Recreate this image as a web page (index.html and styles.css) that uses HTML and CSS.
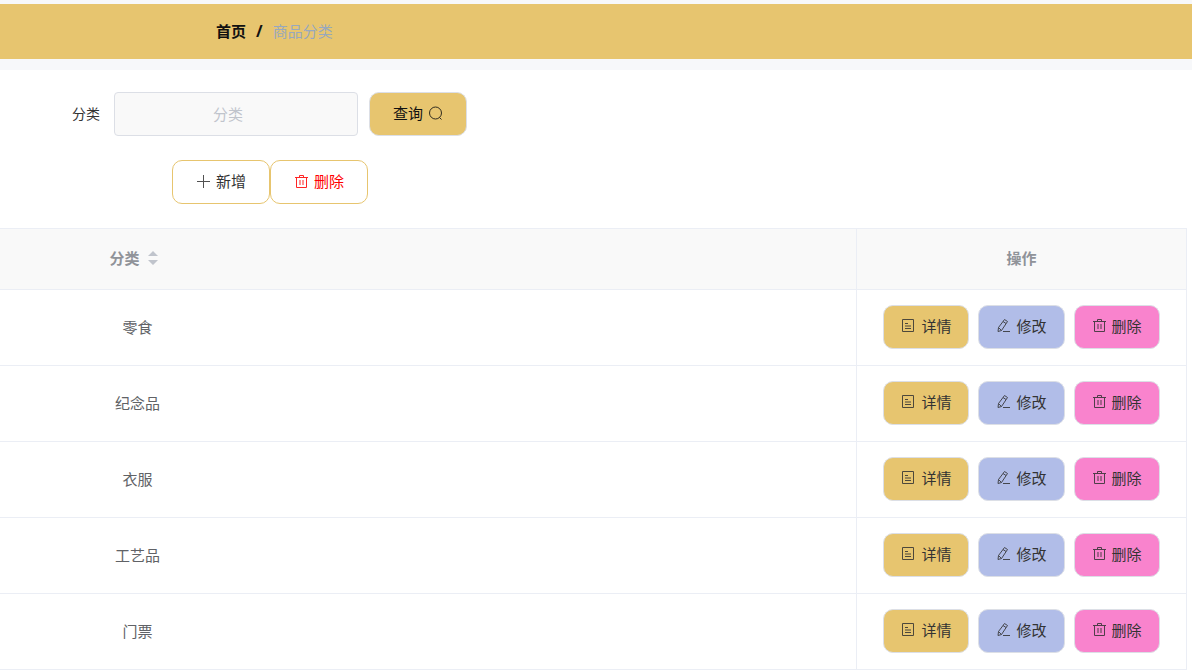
FILE: index.html
```
<!DOCTYPE html>
<html lang="zh-CN">
<head>
    <meta charset="UTF-8">
    <meta name="viewport" content="width=device-width, initial-scale=1.0">
    <title>商品分类</title>
    <link rel="stylesheet" href="styles.css">
</head>
<body>
    <svg class="sprite" aria-hidden="true">
        <symbol id="icon-search" viewBox="0 0 15 15">
            <circle cx="7.5" cy="7" r="6"/>
            <path d="M11.5 11.5l2 2"/>
        </symbol>
        <symbol id="icon-plus" viewBox="0 0 15 15">
            <path d="M7.5 1v13M1 7.5h13"/>
        </symbol>
        <symbol id="icon-delete" viewBox="0 0 15 15">
            <path d="M1 3.5h13M5.5 3.5v-2h4v2M2.5 3.5v10h10v-10M6 6v5M9 6v5"/>
        </symbol>
        <symbol id="icon-detail" viewBox="0 0 15 15">
            <path d="M1.5 1.5h11v12h-11zM4 5.5h3M4 8h6M4 10.5h6"/>
        </symbol>
        <symbol id="icon-edit" viewBox="0 0 15 15">
            <path d="M8.5 1.5l3 2-6 9-3.500 1 .5-4zM7 3.500l3 2M2.500 9.500l3 3M7 13.500h7"/>
        </symbol>
    </svg>

    <nav class="breadcrumb">
        <a href="#" class="home">首页</a>
        <span class="separator">/</span>
        <span class="current">商品分类</span>
    </nav>

    <main class="content">
        <form class="search-form">
            <label for="category">分类</label>
            <input type="text" id="category" placeholder="分类">
            <button type="button" class="btn btn-search">查询<svg class="icon"><use href="#icon-search"/></svg></button>
        </form>

        <div class="toolbar">
            <button type="button" class="btn btn-add"><svg class="icon"><use href="#icon-plus"/></svg>新增</button>
            <button type="button" class="btn btn-remove"><svg class="icon"><use href="#icon-delete"/></svg>删除</button>
        </div>

        <table class="list">
            <thead>
                <tr>
                    <th>
                        <div class="name sortable">分类
                            <svg class="caret" viewBox="0 0 10 14"><path d="M5 0l5 5H0zM0 9h10l-5 5z"/></svg>
                        </div>
                    </th>
                    <th class="actions-col">操作</th>
                </tr>
            </thead>
            <tbody id="rows"></tbody>
        </table>
    </main>

    <script>
        const categories = ["零食", "纪念品", "衣服", "工艺品", "门票"];
        const actions = [
            { type: "detail", text: "详情" },
            { type: "edit", text: "修改" },
            { type: "delete", text: "删除" }
        ];

        // Build the table rows
        document.getElementById("rows").innerHTML = categories.map((name) => `
            <tr>
                <td><div class="name">${name}</div></td>
                <td>
                    <div class="actions">
                        ${actions.map((action) => `
                            <button type="button" class="btn btn-${action.type}"><svg class="icon"><use href="#icon-${action.type}"/></svg>${action.text}</button>
                        `).join("")}
                    </div>
                </td>
            </tr>
        `).join("");
    </script>
</body>
</html>
```
FILE: styles.css
```
* {
    box-sizing: border-box;
}

body {
    margin: 0;
    padding-top: 4px;
    background: #f7f8fa;
    font-family: "Noto Sans CJK SC", sans-serif;
    font-size: 15px;
    line-height: 24px;
    color: #606266;
}

.sprite {
    display: none;
}

.breadcrumb {
    display: flex;
    align-items: center;
    gap: 10px;
    height: 55px;
    padding: 0 0 2px 216px;
    background: #e7c56f;
}

.home,
.separator {
    color: #111;
    font-weight: 700;
    text-decoration: none;
}

.separator {
    font-family: "Open Sans", sans-serif;
    font-size: 16px;
}

.current {
    color: #97a8be;
}

.content {
    margin-top: 11px;
    padding-top: 22px;
    min-height: calc(100vh - 70px);
    background: #fff;
}

.search-form {
    display: flex;
    align-items: center;
    padding-left: 72px;
}

.search-form label {
    margin-right: 14px;
    padding-bottom: 2px;
    font-size: 14px;
    color: #333;
}

.search-form input {
    width: 244px;
    height: 44px;
    margin-right: 11px;
    padding: 0 28px 2px 12px;
    border: 1px solid #dcdfe6;
    border-radius: 4px;
    background: #f9f9f9;
    font: inherit;
    text-align: center;
}

.search-form input::placeholder {
    color: #c0c4cc;
}

.btn {
    display: flex;
    align-items: center;
    gap: 5px;
    height: 44px;
    padding: 0 23px 2px;
    border: 1px solid #dcdfe6;
    border-radius: 10px;
    background: #fff;
    font: inherit;
    color: #333;
    cursor: pointer;
}

.icon {
    width: 15px;
    height: 15px;
    fill: none;
    stroke: currentColor;
    stroke-width: 1;
    opacity: 0.85;
}

.btn-search {
    background: #e7c56f;
    color: #111;
}

.toolbar {
    display: flex;
    margin: 24px 0;
    padding-left: 172px;
}

.toolbar .btn {
    border-color: #e7c56f;
}

.toolbar .btn-remove {
    color: #f00;
}

.list {
    width: calc(100% - 5px);
    border-collapse: separate;
    border-spacing: 0;
    border-top: 1px solid #ebeef5;
}

.list th,
.list td {
    height: 76px;
    padding: 0 0 2px;
    border-right: 1px solid #ebeef5;
    border-bottom: 1px solid #ebeef5;
}

.list th {
    height: 61px;
    background: #f9f9f9;
    color: #909399;
    font-weight: 700;
}

.list .actions-col {
    width: 330px;
}

.name {
    width: 275px;
    text-align: center;
}

.sortable {
    display: flex;
    align-items: center;
    justify-content: center;
    gap: 8px;
    padding-right: 8px;
}

.caret {
    width: 10px;
    height: 14px;
    fill: #c0c4cc;
}

.actions {
    display: flex;
    justify-content: center;
    gap: 9px;
}

.actions .btn {
    padding: 0 17px 2px;
}

.btn-detail {
    background: #e7c56f;
}

.btn-edit {
    background: #b1bde8;
}

.btn-delete {
    background: #f983cd;
}
```
